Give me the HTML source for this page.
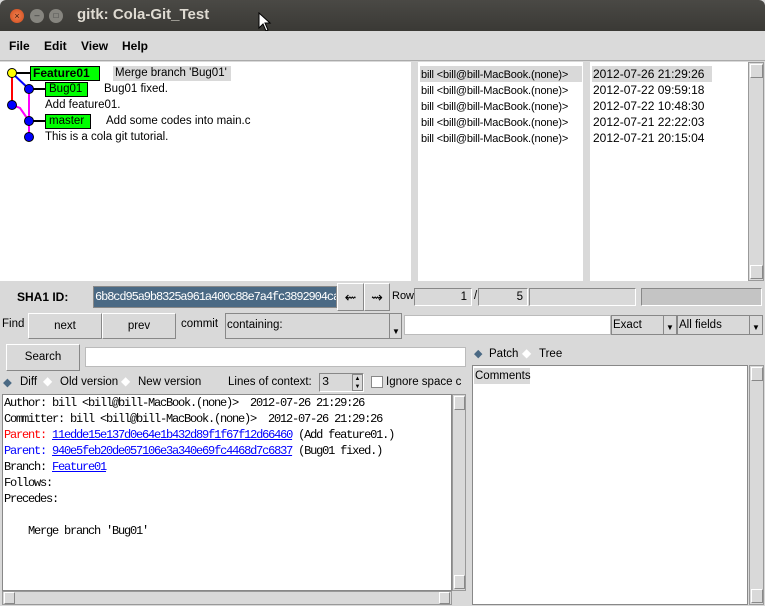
<!DOCTYPE html>
<html><head><meta charset="utf-8"><style>
*{box-sizing:border-box;margin:0;padding:0}
body{width:765px;height:606px;overflow:hidden;background:#d9d9d9;font-family:"Liberation Sans",sans-serif;font-size:11.5px;color:#000;position:relative}
.a{position:absolute;white-space:nowrap}
.w{background:#fff}
.sunk{border:1px solid #888;border-right-color:#fff;border-bottom-color:#fff}
.btn{position:absolute;background:#d9d9d9;border:1px solid #fff;border-right-color:#888;border-bottom-color:#888;text-align:center}
.mono{font-family:"Liberation Mono",monospace;font-size:12px;letter-spacing:-1.2px;line-height:16px}
.sb{position:absolute;background:#d9d9d9;border:1px solid #999}
.arr{position:absolute;left:1px;width:13px;height:14px;border:1px solid #fff;border-right-color:#888;border-bottom-color:#888;background:#d9d9d9}
a{color:#00f;text-decoration:underline}
</style></head><body>
<div class="a" style="left:0;top:0;width:765px;height:31px;background:linear-gradient(#4a4945,#3a3935);border-radius:6px 6px 0 0"></div>
<div class="a" style="left:10px;top:9px;width:14px;height:14px;border-radius:50%;background:radial-gradient(#f08050,#d04a1a);color:#3a1a0a;font-size:9px;text-align:center;line-height:14px">×</div>
<div class="a" style="left:30px;top:9px;width:14px;height:14px;border-radius:50%;background:#86857f;color:#333;font-size:9px;text-align:center;line-height:13px">–</div>
<div class="a" style="left:49px;top:9px;width:14px;height:14px;border-radius:50%;background:#86857f;color:#333;font-size:8px;text-align:center;line-height:14px">□</div>
<div class="a" style="left:77px;top:6px;color:#dfdbd2;font-size:15px;font-weight:bold">gitk: Cola-Git_Test</div>
<svg class="a" style="left:258px;top:12px" width="14" height="20"><path d="M1 1 L1 16 L5 12 L8 19 L10 18 L7 11 L12 11 Z" fill="#fff" stroke="#000"/></svg>
<div class="a" style="left:0;top:31px;width:765px;height:30px;background:#dadada;border-bottom:1px solid #aaa"></div>
<div class="a" style="left:9px;top:39px;font-size:12px;font-weight:bold">File</div>
<div class="a" style="left:44px;top:39px;font-size:12px;font-weight:bold">Edit</div>
<div class="a" style="left:81px;top:39px;font-size:12px;font-weight:bold">View</div>
<div class="a" style="left:122px;top:39px;font-size:12px;font-weight:bold">Help</div>
<div class="a w" style="left:0;top:62px;width:411px;height:219px"></div>
<div class="a w" style="left:418px;top:62px;width:165px;height:219px"></div>
<div class="a w" style="left:590px;top:62px;width:158px;height:219px"></div>
<div class="sb" style="left:748px;top:62px;width:16px;height:219px"><div class="arr" style="top:1px"></div><div class="arr" style="bottom:1px"></div></div>
<svg class="a" style="left:0;top:62px" width="411" height="90">
<line x1="12" y1="11" x2="29" y2="27" stroke="#00f" stroke-width="2"/>
<line x1="12" y1="11" x2="12" y2="43" stroke="red" stroke-width="2"/>
<path d="M12 43 L20 46 L29 59" stroke="#f0f" stroke-width="2" fill="none"/>
<line x1="29" y1="27" x2="29" y2="75" stroke="#f0f" stroke-width="2"/>
<line x1="12" y1="11" x2="31" y2="11" stroke="#000" stroke-width="2"/>
<line x1="29" y1="27" x2="46" y2="27" stroke="#000" stroke-width="2"/>
<line x1="29" y1="59" x2="46" y2="59" stroke="#000" stroke-width="2"/>
<circle cx="12" cy="11" r="4.5" fill="#ff0" stroke="#000"/>
<circle cx="29" cy="27" r="4.5" fill="#00f" stroke="#000"/>
<circle cx="12" cy="43" r="4.5" fill="#00f" stroke="#000"/>
<circle cx="29" cy="59" r="4.5" fill="#00f" stroke="#000"/>
<circle cx="29" cy="75" r="4.5" fill="#00f" stroke="#000"/>
</svg>
<div class="a" style="left:30px;top:66px;width:70px;height:15px;background:#0f0;border:1px solid #000;font-weight:bold;font-size:12px;line-height:13px;padding-left:2px">Feature01</div>
<div class="a" style="left:113px;top:66px;width:118px;height:15px;background:#d9d9d9;line-height:15px;padding-left:2px">Merge branch 'Bug01'</div>
<div class="a" style="left:45px;top:82px;width:43px;height:15px;background:#0f0;border:1px solid #000;line-height:13px;padding-left:3px">Bug01</div>
<div class="a" style="left:104px;top:83px">Bug01 fixed.</div>
<div class="a" style="left:45px;top:99px">Add feature01.</div>
<div class="a" style="left:45px;top:114px;width:46px;height:15px;background:#0f0;border:1px solid #000;line-height:13px;padding-left:3px">master</div>
<div class="a" style="left:106px;top:115px">Add some codes into main.c</div>
<div class="a" style="left:45px;top:131px">This is a cola git tutorial.</div>
<div class="a" style="left:420px;top:66px;width:162px;height:16px;background:#d9d9d9"></div>
<div class="a" style="left:421px;top:67px;line-height:16px;font-size:11px;letter-spacing:-0.15px">bill &lt;bill@bill-MacBook.(none)&gt;<br>bill &lt;bill@bill-MacBook.(none)&gt;<br>bill &lt;bill@bill-MacBook.(none)&gt;<br>bill &lt;bill@bill-MacBook.(none)&gt;<br>bill &lt;bill@bill-MacBook.(none)&gt;</div>
<div class="a" style="left:592px;top:66px;width:120px;height:16px;background:#d9d9d9"></div>
<div class="a" style="left:593px;top:66px;line-height:16px;font-size:12px">2012-07-26 21:29:26<br>2012-07-22 09:59:18<br>2012-07-22 10:48:30<br>2012-07-21 22:22:03<br>2012-07-21 20:15:04</div>
<div class="a" style="left:17px;top:290px;font-weight:bold;font-size:12px">SHA1 ID:</div>
<div class="a" style="left:93px;top:286px;width:244px;height:22px;background:#4a6984;color:#fff;border:1px solid #888;font-family:'Liberation Mono',monospace;font-size:12px;letter-spacing:-1.1px;line-height:20px;overflow:hidden;padding-left:1px">6b8cd95a9b8325a961a400c88e7a4fc3892904ca</div>
<div class="btn" style="left:337px;top:283px;width:27px;height:28px;font-size:14px;line-height:26px">⇜</div>
<div class="btn" style="left:364px;top:283px;width:26px;height:28px;font-size:14px;line-height:26px">⇝</div>
<div class="a" style="left:392px;top:290px;font-size:11px">Row</div>
<div class="a sunk" style="left:414px;top:288px;width:58px;height:18px;text-align:right;padding-right:4px;line-height:16px">1</div>
<div class="a" style="left:474px;top:290px">/</div>
<div class="a sunk" style="left:478px;top:288px;width:50px;height:18px;text-align:right;padding-right:4px;line-height:16px">5</div>
<div class="a sunk" style="left:529px;top:288px;width:107px;height:18px"></div>
<div class="a sunk" style="left:641px;top:288px;width:121px;height:18px;background:#c4c4c4"></div>
<div class="a" style="left:2px;top:318px">Find</div>
<div class="btn" style="left:28px;top:313px;width:74px;height:26px;line-height:24px">next</div>
<div class="btn" style="left:102px;top:313px;width:74px;height:26px;line-height:24px">prev</div>
<div class="a" style="left:181px;top:318px">commit</div>
<div class="a" style="left:225px;top:313px;width:177px;height:26px;border:1px solid #888;line-height:22px;padding-left:1px">containing:</div>
<div class="a" style="left:389px;top:314px;width:13px;height:24px;border-left:1px solid #888;font-size:8px;line-height:36px;text-align:center">▼</div>
<div class="a w" style="left:404px;top:315px;width:207px;height:20px;border:1px solid #bbb"></div>
<div class="a" style="left:611px;top:315px;width:66px;height:20px;border:1px solid #888;line-height:18px;padding-left:1px">Exact</div>
<div class="a" style="left:663px;top:316px;width:13px;height:18px;border-left:1px solid #888;font-size:8px;line-height:24px;text-align:center">▼</div>
<div class="a" style="left:677px;top:315px;width:86px;height:20px;border:1px solid #888;line-height:18px;padding-left:1px">All fields</div>
<div class="a" style="left:749px;top:316px;width:13px;height:18px;border-left:1px solid #888;font-size:8px;line-height:24px;text-align:center">▼</div>
<div class="btn" style="left:6px;top:344px;width:74px;height:27px;line-height:25px">Search</div>
<div class="a w" style="left:85px;top:347px;width:381px;height:20px;border:1px solid #bbb"></div>
<div class="a" style="left:474px;top:347px;color:#4a6984;font-size:11px">◆</div>
<div class="a" style="left:489px;top:348px">Patch</div>
<div class="a" style="left:522px;top:346px;color:#fff;font-size:12px">◆</div>
<div class="a" style="left:539px;top:348px">Tree</div>
<div class="a" style="left:3px;top:375px;color:#4a6984">◆</div>
<div class="a" style="left:20px;top:376px">Diff</div>
<div class="a" style="left:43px;top:374px;color:#fff;font-size:12px">◆</div>
<div class="a" style="left:60px;top:376px">Old version</div>
<div class="a" style="left:121px;top:374px;color:#fff;font-size:12px">◆</div>
<div class="a" style="left:138px;top:376px">New version</div>
<div class="a" style="left:228px;top:376px">Lines of context:</div>
<div class="a sunk" style="left:319px;top:373px;width:45px;height:19px;font-family:'Liberation Mono',monospace;font-size:12px;line-height:17px;padding-left:2px">3</div>
<div class="a" style="left:352px;top:374px;width:11px;height:17px;border:1px solid #888;font-size:6px;line-height:8px;text-align:center">▲<br>▼</div>
<div class="a w" style="left:371px;top:376px;width:12px;height:12px;border:1px solid #888"></div>
<div class="a" style="left:386px;top:376px">Ignore space c</div>
<div class="a w" style="left:2px;top:394px;width:450px;height:197px;border:1px solid #888"></div>
<div class="a mono" style="left:4px;top:395px;white-space:pre">Author: bill &lt;bill@bill-MacBook.(none)&gt;  2012-07-26 21:29:26
Committer: bill &lt;bill@bill-MacBook.(none)&gt;  2012-07-26 21:29:26
<span style="color:red">Parent:</span> <a>11edde15e137d0e64e1b432d89f1f67f12d66460</a> (Add feature01.)
<span style="color:#00f">Parent:</span> <a>940e5feb20de057106e3a340e69fc4468d7c6837</a> (Bug01 fixed.)
Branch: <a>Feature01</a>
Follows:
Precedes:

    Merge branch 'Bug01'</div>
<div class="sb" style="left:452px;top:394px;width:14px;height:197px"><div class="arr" style="top:1px;width:11px"></div><div class="arr" style="bottom:1px;width:11px"></div></div>
<div class="sb" style="left:2px;top:591px;width:450px;height:14px"><div class="arr" style="top:0;left:1px;width:11px;height:12px"></div><div class="arr" style="top:0;left:auto;right:1px;width:11px;height:12px"></div></div>
<div class="a w" style="left:472px;top:365px;width:276px;height:240px;border:1px solid #888"></div>
<div class="a" style="left:474px;top:368px;width:56px;height:16px;background:#d9d9d9;line-height:16px;padding-left:1px">Comments</div>
<div class="sb" style="left:749px;top:365px;width:15px;height:240px"><div class="arr" style="top:1px;width:12px"></div><div class="arr" style="bottom:1px;width:12px"></div></div>
</body></html>
